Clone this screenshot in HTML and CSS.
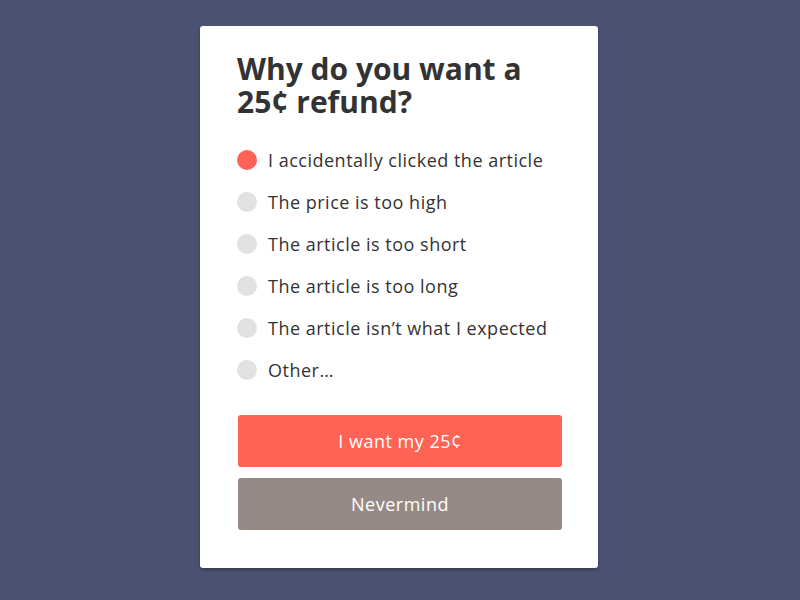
FILE: index.html
```html
<!DOCTYPE html>
<html>
<head>
<meta charset="utf-8">
<link rel="stylesheet" href="styles.css">
</head>
<body>
<div class="card">
  <h1 class="title">Why do you want a 25¢ refund?</h1>
  <ul class="options">
    <li class="option selected"><span class="radio"></span><span class="label">I accidentally clicked the article</span></li>
    <li class="option"><span class="radio"></span><span class="label">The price is too high</span></li>
    <li class="option"><span class="radio"></span><span class="label">The article is too short</span></li>
    <li class="option"><span class="radio"></span><span class="label">The article is too long</span></li>
    <li class="option"><span class="radio"></span><span class="label">The article isn’t what I expected</span></li>
    <li class="option"><span class="radio"></span><span class="label">Other…</span></li>
  </ul>
  <div class="actions">
    <button class="btn btn-primary">I want my 25¢</button>
    <button class="btn btn-secondary">Nevermind</button>
  </div>
</div>
</body>
</html>
```
FILE: styles.css
```css
html, body {
  margin: 0;
  padding: 0;
  height: 100%;
}
body {
  background: #4b5170;
  font-family: "Open Sans", Lato, sans-serif;
  color: #333;
  display: flex;
  justify-content: center;
  align-items: flex-start;
  padding-right: 2px;
  box-sizing: border-box;
}
.card {
  width: 398px;
  box-sizing: border-box;
  margin-top: 26px;
  background: #fff;
  border-radius: 3px;
  box-shadow: 0 2px 3px rgba(0,0,0,0.25);
  padding: 26px 36px 38px 37px;
}
.title {
  margin: 0;
  font-size: 30px;
  line-height: 33px;
  font-weight: 700;
  color: #333;
  width: 310px;
}
.options {
  list-style: none;
  margin: 32px 0 0;
  padding: 0;
  display: flex;
  flex-direction: column;
  gap: 22px;
}
.option {
  display: flex;
  align-items: center;
  gap: 11px;
  height: 20px;
  font-size: 18px;
  letter-spacing: 0.5px;
}
.radio {
  width: 20px;
  height: 20px;
  border-radius: 50%;
  background: #e1e1e1;
  flex: none;
}
.selected .radio {
  background: #ff6357;
}
.actions {
  margin-top: 35px;
  margin-left: 1px;
  display: flex;
  flex-direction: column;
  gap: 11px;
}
.btn {
  height: 52px;
  border: none;
  border-radius: 3px;
  color: #fff;
  font-family: inherit;
  font-size: 18px;
  letter-spacing: 0.5px;
  padding: 0;
}
.btn-primary {
  background: #ff6355;
}
.btn-secondary {
  background: #968a86;
}
```
